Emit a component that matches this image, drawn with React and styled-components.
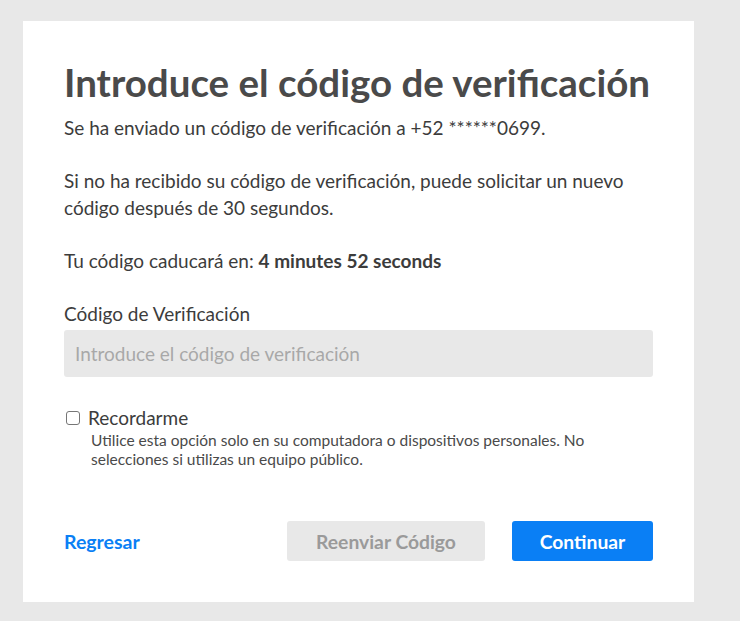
import styled, { createGlobalStyle } from "styled-components";

const GlobalStyle = createGlobalStyle`
  html, body {
    margin: 0;
    padding: 0;
    background: #e8e8e8;
  }
  body {
    font-family: Lato, "Open Sans", Arial, sans-serif;
  }
`;

const Page = styled.div`
  width: 740px;
  height: 621px;
  padding: 21px 0 0 23px;
  box-sizing: border-box;
`;

const Card = styled.div`
  width: 671px;
  height: 581px;
  background: #fff;
  box-sizing: border-box;
  padding: 38px 41px 0 41px;
  display: flex;
  flex-direction: column;
`;

const Title = styled.h1`
  margin: 0;
  font-size: 38.5px;
  line-height: 46px;
  font-weight: 700;
  color: #4a4a4a;
  white-space: nowrap;
`;

const Text = styled.p`
  margin: ${(p) => p.$mt || 0}px 0 0;
  font-size: 19px;
  line-height: 27px;
  color: #3c3c3c;
  strong {
    font-weight: 700;
  }
`;

const Label = styled.label`
  display: block;
  margin-top: 26px;
  font-size: 19px;
  line-height: 27px;
  color: #3c3c3c;
`;

const Input = styled.input`
  display: block;
  margin-top: 3.5px;
  width: 100%;
  height: 47px;
  box-sizing: border-box;
  border: none;
  border-radius: 3px;
  background: #e8e8e8;
  padding: 0 11px;
  font-family: inherit;
  font-size: 19px;
  color: #333;
  outline: none;
  &::placeholder {
    color: #a8a8a8;
  }
`;

const CheckRow = styled.label`
  display: flex;
  align-items: center;
  gap: 8px;
  margin-top: 29px;
  font-size: 19px;
  line-height: 24px;
  color: #3c3c3c;
`;

const Box = styled.input`
  appearance: none;
  margin: 0 0 0 2px;
  width: 14px;
  height: 14px;
  border: 1px solid #767676;
  border-radius: 3px;
  background: #fff;
  flex: none;
`;

const Hint = styled.p`
  margin: 0.5px 0 0 27px;
  font-size: 15.5px;
  line-height: 19px;
  color: #4a4a4a;
  max-width: 495px;
`;

const Actions = styled.div`
  display: flex;
  align-items: center;
  margin-top: 52.5px;
`;

const BackLink = styled.a`
  font-size: 19.5px;
  font-weight: 700;
  color: #0a7ff5;
  text-decoration: none;
  margin-right: auto;
`;

const Button = styled.button`
  height: 40px;
  border: none;
  border-radius: 3px;
  font-family: inherit;
  font-size: 19.3px;
  font-weight: 700;
  padding: 0;
  width: ${(p) => p.$w}px;
  margin-left: ${(p) => p.$ml || 0}px;
  background: ${(p) => (p.$primary ? "#0a7ff5" : "#e8e8e8")};
  color: ${(p) => (p.$primary ? "#fff" : "#9a9a9a")};
`;

export default function App() {
  return (
    <>
      <GlobalStyle />
      <Page>
        <Card>
          <Title>Introduce el código de verificación</Title>
          <Text $mt={8.5}>Se ha enviado un código de verificación a +52 ******0699.</Text>
          <Text $mt={26}>
            Si no ha recibido su código de verificación, puede solicitar un nuevo
            código después de 30 segundos.
          </Text>
          <Text $mt={26}>
            Tu código caducará en: <strong>4 minutes 52 seconds</strong>
          </Text>
          <Label htmlFor="code">Código de Verificación</Label>
          <Input id="code" placeholder="Introduce el código de verificación" />
          <CheckRow>
            <Box type="checkbox" />
            Recordarme
          </CheckRow>
          <Hint>
            Utilice esta opción solo en su computadora o dispositivos personales. No
            selecciones si utilizas un equipo público.
          </Hint>
          <Actions>
            <BackLink href="#">Regresar</BackLink>
            <Button $w={198}>Reenviar Código</Button>
            <Button $w={141} $ml={27} $primary>
              Continuar
            </Button>
          </Actions>
        </Card>
      </Page>
    </>
  );
}
